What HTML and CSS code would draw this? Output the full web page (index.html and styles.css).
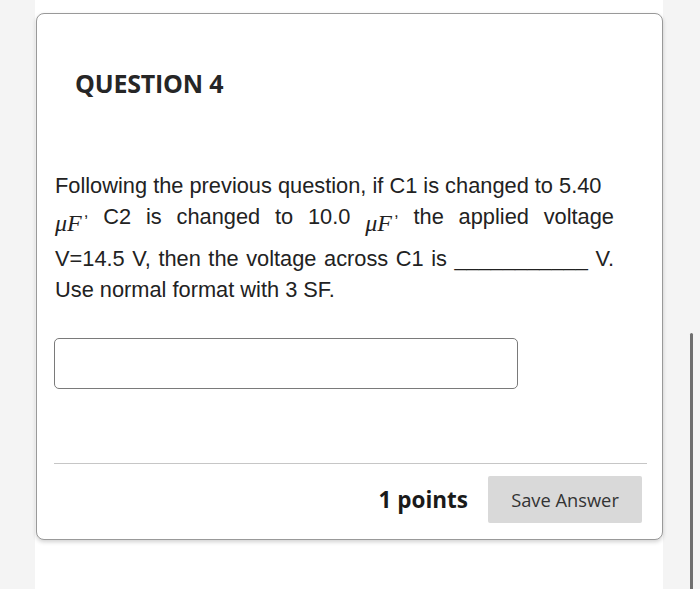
FILE: index.html
```html
<!DOCTYPE html>
<html>
<head>
<meta charset="utf-8">
<link rel="stylesheet" href="styles.css">
</head>
<body>
<div class="page">
  <div class="column">
    <div class="card">
      <h2 class="title">QUESTION 4</h2>
      <div class="question">
        <div class="line l1">Following the previous question, if C1 is changed to 5.40</div>
        <div class="line l2 just"><span class="math">μF</span><span class="mcomma">,</span> C2 is changed to 10.0 <span class="math">μF</span><span class="mcomma">,</span> the applied voltage</div>
        <div class="line l3 just">V=14.5 V, then the voltage across C1 is <span class="blank">___________</span> V.</div>
        <div class="line l4">Use normal format with 3 SF.</div>
      </div>
      <div class="answer"><div class="input"></div></div>
      <div class="divider"></div>
      <div class="footer">
        <span class="points">1 points</span>
        <button class="save">Save Answer</button>
      </div>
    </div>
  </div>
  <div class="scrollbar"></div>
</div>
</body>
</html>
```
FILE: styles.css
```css
html, body {
  margin: 0;
  padding: 0;
}
body {
  background: #f4f4f4;
  width: 700px;
  height: 589px;
  overflow: hidden;
}
.page {
  position: relative;
  width: 700px;
  height: 589px;
}
.column {
  margin-left: 35px;
  width: 628px;
  height: 589px;
  background: #ffffff;
  padding-top: 13px;
  box-sizing: border-box;
}
.card {
  margin-left: 1px;
  width: 627px;
  box-sizing: border-box;
  border: 1px solid #999999;
  border-radius: 8px;
  background: #ffffff;
  box-shadow: 0 2px 4px rgba(0, 0, 0, 0.18);
  padding-bottom: 16px;
}
.title {
  margin: 54px 0 0 38px;
  font-family: "Open Sans", sans-serif;
  font-weight: 700;
  font-size: 25px;
  line-height: 30px;
  color: #262626;
  letter-spacing: -0.2px;
}
.question {
  margin-top: 72px;
  padding: 0 48px 0 18px;
  font-family: "Liberation Sans", Arial, sans-serif;
  font-size: 21.8px;
  line-height: 31px;
  color: #222222;
}
.line {
  height: 31px;
  white-space: nowrap;
}
.l2 {
  height: 42px;
}
.just {
  white-space: normal;
  text-align: justify;
  text-align-last: justify;
}
.math {
  font-family: "Liberation Serif", "Times New Roman", serif;
  font-style: italic;
  font-size: 24px;
  line-height: 0;
  vertical-align: -7px;
}
.mcomma {
  font-size: 17px;
  line-height: 0;
  vertical-align: 7px;
  margin-left: 2px;
}
.blank {
  letter-spacing: 0;
}
.answer {
  margin-top: 33px;
  padding-left: 17px;
}
.input {
  width: 464px;
  height: 51px;
  box-sizing: border-box;
  border: 1.5px solid #7a7a7a;
  border-radius: 5px;
  background: #ffffff;
}
.divider {
  margin: 74px 15px 0 17px;
  height: 1px;
  background: #c6c6c6;
}
.footer {
  margin-top: 12px;
  display: flex;
  justify-content: flex-end;
  align-items: center;
  gap: 20px;
  padding-right: 20px;
}
.points {
  font-family: "Open Sans", sans-serif;
  font-weight: 700;
  font-size: 22.5px;
  color: #1a1a1a;
}
.save {
  width: 154px;
  height: 47px;
  border: none;
  border-radius: 2px;
  background: #d9d9d9;
  font-family: "Open Sans", sans-serif;
  font-size: 18.3px;
  color: #333333;
  padding: 0;
}
.scrollbar {
  position: absolute;
  left: 690px;
  top: 333px;
  width: 3px;
  height: 260px;
  border-radius: 2px;
  background: #6f6f6f;
}
```
